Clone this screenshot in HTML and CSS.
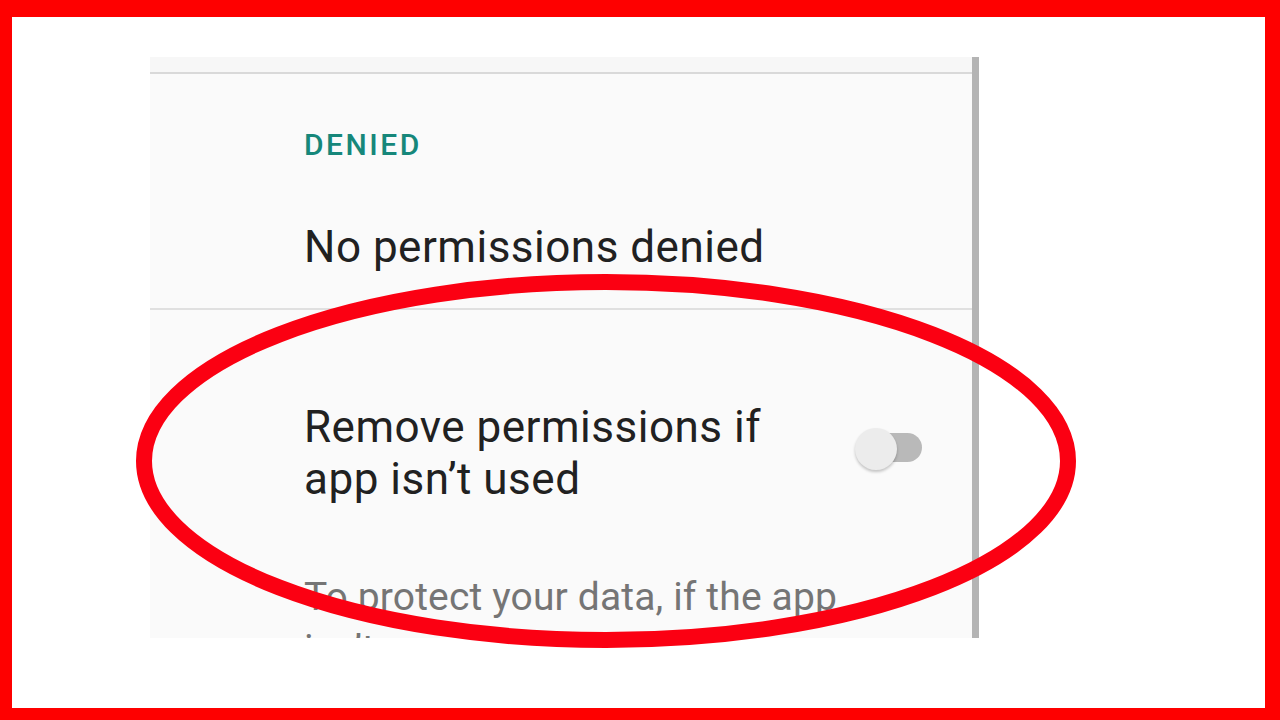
FILE: index.html
```html
<!DOCTYPE html>
<html lang="en">
<head>
    <meta charset="UTF-8">
    <title>App permissions</title>
    <link rel="stylesheet" href="styles.css">
</head>
<body>

<div class="frame">
    <div class="panel">
        <div class="screen">
            <div class="topbar"></div>

            <div class="section">
                <div class="section-title">DENIED</div>
                <div class="item-text">No permissions denied</div>
            </div>

            <div class="switch-row">
                <div class="switch-label">Remove permissions if app isn’t used</div>
                <div class="switch">
                    <span class="switch-track"></span>
                    <span class="switch-thumb"></span>
                </div>
            </div>

            <div class="summary">To protect your data, if the app isn’t used for a few months, permissions will be removed</div>
        </div>
        <div class="scrollbar"></div>
    </div>
</div>

<!-- marker circle drawn on top -->
<svg class="marker" width="1280" height="720" viewBox="0 0 1280 720">
    <ellipse cx="606" cy="461" rx="462" ry="179" fill="none" stroke="#fb0012" stroke-width="16"/>
</svg>

</body>
</html>
```

FILE: styles.css
```css
body {
    margin: 0;
    font-family: Roboto, "Noto Sans", sans-serif;
    background: #fff;
}

.frame {
    width: 1280px;
    height: 720px;
    box-sizing: border-box;
    border-style: solid;
    border-color: #fe0000;
    border-width: 17px 15px 12px 12px;
    padding: 40px 0 0 138px;
    background: #fff;
    overflow: hidden;
}

.panel {
    display: flex;
    width: 829px;
    height: 581px;
    background: #fafafa;
}

.screen {
    flex: 1;
    overflow: hidden;
}

.scrollbar {
    width: 7px;
    background: #b4b4b4;
}

.topbar {
    height: 15px;
    background: #f7f7f7;
    border-bottom: 2px solid #d9d9d9;
}

.section {
    padding: 53px 0 37px 154px;
    border-bottom: 2px solid #e0e0e0;
}

.section-title {
    font-size: 30px;
    line-height: 36px;
    font-weight: 500;
    letter-spacing: 2.5px;
    color: #16877a;
    margin-bottom: 60px;
}

.item-text {
    font-size: 44px;
    line-height: 48px;
    letter-spacing: 0.5px;
    color: #212121;
}

.switch-row {
    display: flex;
    justify-content: space-between;
    align-items: flex-start;
    padding: 91px 50px 0 154px;
}

.switch-label {
    width: 500px;
    font-size: 44px;
    line-height: 52px;
    letter-spacing: 0.5px;
    color: #212121;
}

.switch {
    position: relative;
    width: 67px;
    height: 42px;
    margin-top: 27px;
}

.switch-track {
    position: absolute;
    right: 0;
    top: 5px;
    width: 60px;
    height: 29px;
    border-radius: 15px;
    background: #b9b9b9;
}

.switch-thumb {
    position: absolute;
    left: 0;
    top: 0;
    width: 42px;
    height: 42px;
    border-radius: 50%;
    background: #ececec;
    box-shadow: 0 2px 3px rgba(0, 0, 0, 0.22);
}

.summary {
    margin-top: 66px;
    padding: 0 120px 0 154px;
    font-size: 39px;
    line-height: 52px;
    letter-spacing: 0.15px;
    color: #757575;
}

.marker {
    position: absolute;
    left: 0;
    top: 0;
    pointer-events: none;
}
```
